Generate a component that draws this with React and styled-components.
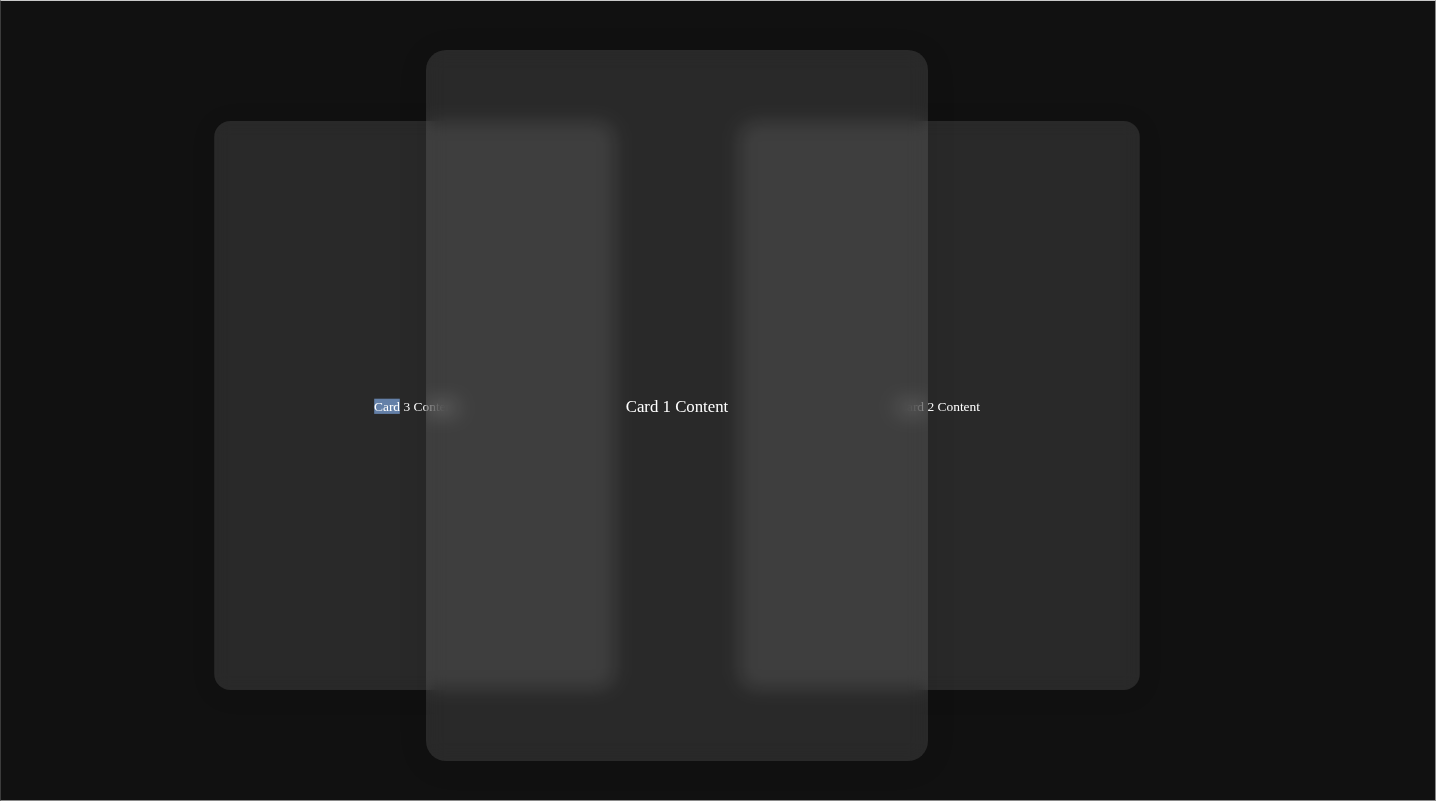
import React from "react";
import styled, { createGlobalStyle } from "styled-components";

const GlobalStyle = createGlobalStyle`
  * {
    box-sizing: border-box;
  }

  html,
  body {
    margin: 0;
    padding: 0;
    background: #111111;
  }

  body {
    font-family: "Liberation Serif", "Times New Roman", serif;
    color: #ffffff;
  }
`;

const cards = [
  { id: 3, offset: -262, scale: 0.8, layer: 1, highlight: true },
  { id: 2, offset: 262, scale: 0.8, layer: 1 },
  { id: 1, offset: 0, scale: 1, layer: 2 },
];

export default function App() {
  return (
    <>
      <GlobalStyle />
      <Page>
        <Stage>
          {cards.map((card) => (
            <Card
              key={card.id}
              $offset={card.offset}
              $scale={card.scale}
              $layer={card.layer}
            >
              <CardText>
                {card.highlight ? <Selected>Card</Selected> : "Card"} {card.id}{" "}
                Content
              </CardText>
            </Card>
          ))}
        </Stage>
      </Page>
    </>
  );
}

const Page = styled.main`
  display: flex;
  align-items: center;
  justify-content: center;
  width: 100vw;
  height: 100vh;
  padding: 10px 82px 0 0;
  background: #111111;
  border: 1px solid #8a8a8a;
  border-top-color: #c9c9c9;
  border-left-color: #3c3c3c;
  overflow: hidden;
`;

const Stage = styled.section`
  display: grid;
  place-items: center;
`;

const Card = styled.div`
  grid-area: 1 / 1;
  display: flex;
  align-items: center;
  justify-content: center;
  width: 502px;
  height: 711px;
  padding-top: 4px;
  border-radius: 20px;
  background: rgba(255, 255, 255, 0.1);
  box-shadow: 0 4px 30px rgba(0, 0, 0, 0.1);
  backdrop-filter: blur(10px);
  -webkit-backdrop-filter: blur(10px);
  transform: ${({ $offset, $scale }) =>
    `translateX(${$offset}px) scale(${$scale})`};
  z-index: ${({ $layer }) => $layer};
`;

const CardText = styled.p`
  margin: 0;
  font-size: 16.8px;
  line-height: 1.2;
  color: #ffffff;
`;

const Selected = styled.span`
  background: #6480a8;
  color: #ffffff;
`;
